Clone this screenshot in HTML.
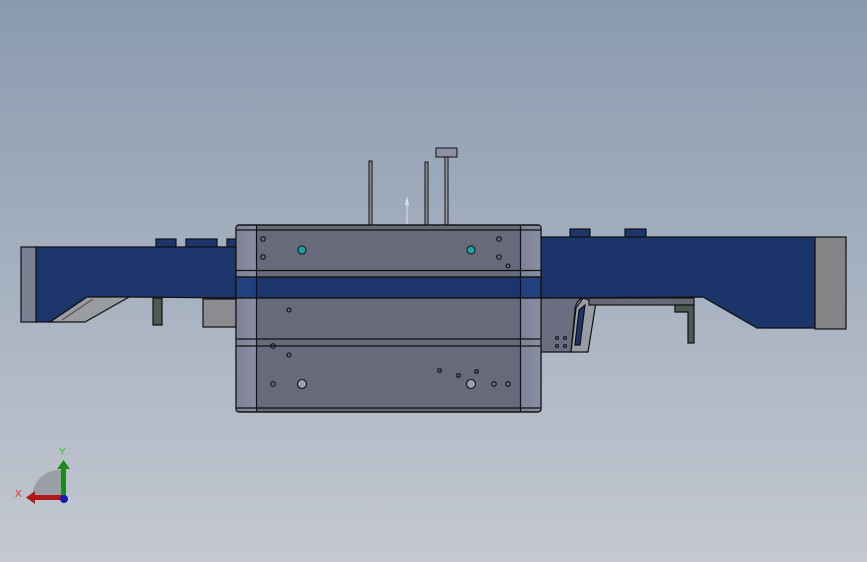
<!DOCTYPE html>
<html><head><meta charset="utf-8"><style>
html,body{margin:0;padding:0;width:867px;height:562px;overflow:hidden}
body{background:linear-gradient(#8a9aae 0%,#a3afbf 45%,#c4c8d0 100%)}
svg{position:absolute;left:0;top:0}
</style></head><body>
<svg width="867" height="562" viewBox="0 0 867 562" xmlns="http://www.w3.org/2000/svg">
<defs>
<linearGradient id="edge" x1="0" x2="1"><stop offset="0" stop-color="#7d8296"/><stop offset="1" stop-color="#8a8ea2"/></linearGradient>
</defs>
<g stroke="#111" stroke-width="1">
<rect x="369" y="161" width="3" height="64" fill="#8a8e96"/>
<rect x="425" y="162" width="3" height="63" fill="#8a8e96"/>
<rect x="445" y="157" width="3" height="68" fill="#9a9ca2"/>
<rect x="436" y="148" width="21" height="9" fill="#8c90a0"/>
</g>
<line x1="407" y1="200" x2="407" y2="225" stroke="#dde" stroke-width="1"/>
<path d="M405 205 L407 196 L409 205Z" fill="#dde"/>
<g stroke="#111" stroke-width="1.2">
<rect x="156" y="239" width="20" height="8" fill="#1c356c"/>
<rect x="186" y="239" width="31" height="8" fill="#1c356c"/>
<rect x="227" y="239" width="9" height="8" fill="#1c356c"/>
<rect x="203" y="299" width="33" height="28" fill="#8a8c92"/>
<path d="M153 298 L162 298 L162 325 L153 325Z" fill="#4b5a52"/>
<path d="M36 247 L236 247 L236 298 L129 297 L87 297 L50 322 L36 322Z" fill="#1c356b"/>
<path d="M87 297 L129 297 L85 322 L50 322Z" fill="#9a9ca0"/>
<line x1="93" y1="299" x2="62" y2="320" stroke="#555"/>
<rect x="21" y="247" width="15" height="75" fill="#7b8092"/>
<rect x="570" y="229" width="20" height="8" fill="#1c356c"/>
<rect x="625" y="229" width="21" height="8" fill="#1c356c"/>
<path d="M540 298 L583 298 Q576 300 575 310 L571 352 L540 352Z" fill="#6a6e80"/>
<path d="M583 298 L596 302 L588 352 L571 352 L576 308Z" fill="#9a9ca4"/>
<path d="M579 310 L585 305 L580 345 L575 345Z" fill="#1c356c"/>
<rect x="589" y="298" width="105" height="7" fill="#666a74"/>
<path d="M675 305 L694 305 L694 343 L688 343 L688 312 L675 312Z" fill="#4b5a52"/>
<path d="M540 237 L815 237 L815 328 L757 328 L703 297 L540 298Z" fill="#1b346a"/>
<rect x="815" y="237" width="31" height="92" fill="#848486"/>
<rect x="236" y="225" width="305" height="187" rx="3" fill="#676a7b"/>
<rect x="236.5" y="226" width="20" height="185" fill="url(#edge)" stroke="none"/>
<rect x="520" y="226" width="20.5" height="185" fill="url(#edge)" stroke="none"/>
<rect x="236" y="277" width="305" height="21" fill="#1c356c"/>
<rect x="236" y="277" width="20" height="21" fill="#22407e" stroke="none"/>
<rect x="520" y="277" width="21" height="21" fill="#22407e" stroke="none"/>
<rect x="236" y="225" width="305" height="187" rx="3" fill="none"/>
<line x1="236" y1="270.5" x2="541" y2="270.5"/>
<line x1="236" y1="277" x2="541" y2="277"/>
<line x1="236" y1="298" x2="541" y2="298"/>
<line x1="236" y1="339" x2="541" y2="339"/>
<line x1="236" y1="346" x2="541" y2="346"/>
<line x1="236" y1="408" x2="541" y2="408"/>
<line x1="236" y1="230" x2="541" y2="230"/>
<line x1="256.5" y1="226" x2="256.5" y2="411"/>
<line x1="520.5" y1="226" x2="520.5" y2="411"/>
<g fill="none" stroke="#111" stroke-width="1.1">
<circle cx="263" cy="239" r="2.3"/><circle cx="263" cy="257" r="2.3"/>
<circle cx="499" cy="239" r="2.3"/><circle cx="499" cy="257" r="2.3"/><circle cx="508" cy="266" r="2"/>
<circle cx="289" cy="310" r="2"/><circle cx="273" cy="346" r="2.3"/><circle cx="289" cy="355" r="2"/>
<circle cx="273" cy="384" r="2.3"/><circle cx="302" cy="384" r="4.5" fill="#9aa0b4"/>
<circle cx="471" cy="384" r="4.5" fill="#9aa0b4"/><circle cx="494" cy="384" r="2.3"/><circle cx="508" cy="384" r="2.3"/>
<rect x="438" y="369" width="3" height="3"/><rect x="457" y="374" width="3" height="3"/><rect x="475" y="370" width="3" height="3"/>
<circle cx="557" cy="338" r="1.5"/><circle cx="565" cy="338" r="1.5"/><circle cx="557" cy="346" r="1.5"/><circle cx="565" cy="346" r="1.5"/>
</g>
<circle cx="302" cy="250" r="4" fill="#1aa6a6" stroke="#222"/>
<circle cx="471" cy="250" r="4" fill="#1aa6a6" stroke="#222"/>
</g>
<path d="M33 500 L33 490 A28 28 0 0 1 63 470 L63 500Z" fill="#9a9ea6"/>
<rect x="61" y="468" width="5" height="32" fill="#1a8a1a"/>
<path d="M57 469 L63.5 460 L70 469Z" fill="#1a8a1a"/>
<rect x="34" y="495" width="30" height="5" fill="#b01818"/>
<path d="M35 491 L26 497.5 L35 504Z" fill="#b01818"/>
<circle cx="64" cy="499" r="4" fill="#1818b0"/>
<text x="59" y="455" font-family="Liberation Sans,sans-serif" font-size="10" fill="#2c2">Y</text>
<text x="15" y="497" font-family="Liberation Sans,sans-serif" font-size="10" fill="#e22">X</text>
</svg>
</body></html>
